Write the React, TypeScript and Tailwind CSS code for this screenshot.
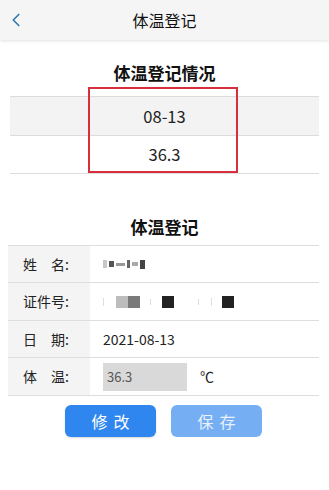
import { ChevronLeft } from 'lucide-react';

const font = { fontFamily: '"Noto Sans CJK SC", "Noto Sans", sans-serif' };

function Row({ label, h, children }: { label: string; h: string; children: React.ReactNode }) {
  return (
    <div className={`flex border-t border-[#dedede] ${h}`}>
      <div className="w-[82px] bg-[#f4f4f4] flex items-center pl-[15px] text-[14px] text-[#222]">
        {label}
      </div>
      <div className="flex-1 flex items-center pl-[13px] text-[14px] text-[#222]">{children}</div>
    </div>
  );
}

export default function App() {
  return (
    <div className="w-[329px] h-[490px] bg-white overflow-hidden" style={font}>
      <header className="h-[40px] bg-[#f5f5f5] shadow-[0_1px_3px_rgba(0,0,0,0.12)] relative flex items-center justify-center">
        <ChevronLeft size={22} strokeWidth={1.8} className="absolute left-[5px] top-[9px] text-[#2f78ad]" />
        <h1 className="text-[16px] text-[#111]">体温登记</h1>
      </header>

      <h2 className="mt-[21px] text-center text-[17px] font-bold text-[#111] leading-[24px]">体温登记情况</h2>

      <div className="relative mx-[10px] mt-[11px] border-t border-b border-[#dcdcdc] text-[16.5px] text-[#222]">
        <div className="h-[38px] bg-[#f3f3f3] flex items-center justify-center">08-13</div>
        <div className="h-[38px] border-t border-[#dcdcdc] flex items-center justify-center">36.3</div>
        <div className="absolute left-[78px] top-[-10px] w-[150px] h-[86px] border-2 border-[#d7303c]" />
      </div>

      <h2 className="mt-[41px] text-center text-[17px] font-bold text-[#111] leading-[24px]">体温登记</h2>

      <div className="ml-[8px] mr-[10px] mt-[6px] border-b border-[#dedede]">
        <Row label="姓　名:" h="h-[37px]">
          <div className="flex items-center gap-[2px]">
            <span className="w-[4px] h-[8px] bg-[#c8c8c8]" />
            <span className="w-[5px] h-[6px] bg-[#555]" />
            <span className="w-[9px] h-[3px] bg-[#999]" />
            <span className="w-[3px] h-[8px] bg-[#666]" />
            <span className="w-[6px] h-[4px] bg-[#aaa]" />
            <span className="w-[5px] h-[9px] bg-[#444]" />
          </div>
        </Row>
        <Row label="证件号:" h="h-[38px]">
          <div className="flex items-center">
            <span className="w-[1px] h-[8px] bg-[#ddd]" />
            <span className="ml-[12px] w-[12px] h-[12px] bg-[#bdbdbd]" />
            <span className="w-[12px] h-[12px] bg-[#7a7a7a]" />
            <span className="ml-[10px] w-[1px] h-[6px] bg-[#ddd]" />
            <span className="ml-[11px] w-[12px] h-[12px] bg-[#222]" />
            <span className="ml-[24px] w-[1px] h-[6px] bg-[#ddd]" />
            <span className="ml-[12px] w-[1px] h-[8px] bg-[#ddd]" />
            <span className="ml-[10px] w-[12px] h-[12px] bg-[#222]" />
          </div>
        </Row>
        <Row label="日　期:" h="h-[37px]">
          2021-08-13
        </Row>
        <Row label="体　温:" h="h-[38px]">
          <div className="w-[84px] h-[28px] bg-[#d9d9d9] flex items-center pl-[4px] text-[13px] text-[#555]">36.3</div>
          <span className="ml-[13px] text-[14px] text-[#222]">℃</span>
        </Row>
      </div>

      <div className="mt-[9px] flex justify-center gap-[15px] pr-[2px]">
        <button className="w-[91px] h-[32px] rounded-[6px] bg-[#2f86ee] text-white text-[16px] tracking-[6px] pl-[6px] shadow-[0_1px_2px_rgba(0,0,0,0.15)]">
          修改
        </button>
        <button className="w-[91px] h-[32px] rounded-[6px] bg-[#76aef4] text-[#e8f1fd] text-[16px] tracking-[6px] pl-[6px]">
          保存
        </button>
      </div>
    </div>
  );
}
